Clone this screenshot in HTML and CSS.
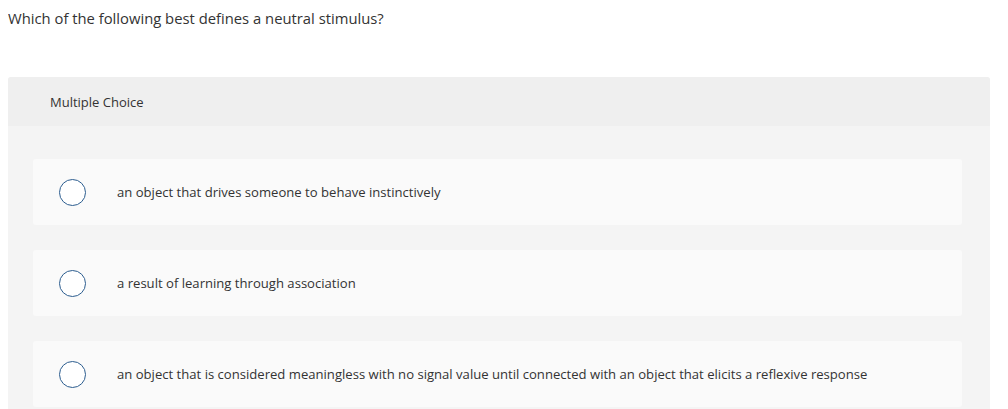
FILE: index.html
```html
<!DOCTYPE html>
<html>
<head>
<meta charset="utf-8">
<link rel="stylesheet" href="styles.css">
</head>
<body>
<p class="question">Which of the following best defines a neutral stimulus?</p>
<section class="panel">
  <header class="panel-head">Multiple Choice</header>
  <div class="options">
    <label class="option"><span class="radio"></span><span class="opt-text">an object that drives someone to behave instinctively</span></label>
    <label class="option"><span class="radio"></span><span class="opt-text">a result of learning through association</span></label>
    <label class="option"><span class="radio"></span><span class="opt-text">an object that is considered meaningless with no signal value until connected with an object that elicits a reflexive response</span></label>
  </div>
</section>
</body>
</html>
```
FILE: styles.css
```css
body {
  margin: 8px;
  font-family: "Open Sans", Lato, sans-serif;
  color: #333;
  background: #fff;
}
.question {
  margin: 0;
  padding-top: 1px;
  font-size: 14.8px;
  line-height: 18px;
}
.panel {
  margin-top: 50px;
  width: 982px;
  background: #f4f4f4;
  border-radius: 3px 3px 0 0;
}
.panel-head {
  height: 49px;
  display: flex;
  align-items: center;
  padding-left: 42px;
  background: #efefef;
  border-radius: 3px 3px 0 0;
  font-size: 13px;
}
.options {
  display: flex;
  flex-direction: column;
  gap: 25px;
  padding: 33px 28px 30px 25px;
}
.option {
  display: flex;
  align-items: center;
  height: 66px;
  background: #fafafa;
  border-radius: 3px;
  padding-left: 26px;
}
.radio {
  width: 25px;
  height: 25px;
  border: 1.5px solid #2c5d8f;
  border-radius: 50%;
  background: #fff;
  flex: none;
}
.opt-text {
  margin-left: 31px;
  font-size: 13.1px;
}
```
